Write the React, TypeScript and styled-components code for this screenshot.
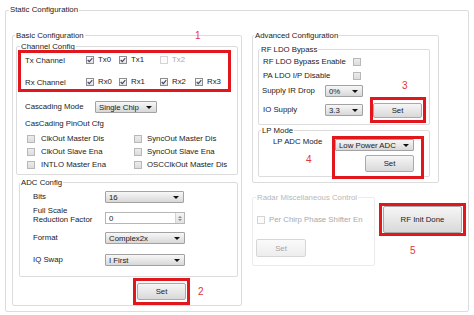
import React from "react";
import styled, { createGlobalStyle } from "styled-components";

const Global = createGlobalStyle`
  html, body { margin: 0; padding: 0; background: #fff; }
  body {
    font-family: "Liberation Sans", Arial, sans-serif;
    font-size: 7.8px;
    color: #222;
  }
`;

const RED = "#e2161d";

const Page = styled.div`
  width: 474px;
  height: 315px;
  box-sizing: border-box;
  padding: 4px 0 0 5px;
  background: #fff;
  overflow: hidden;
`;

const Group = styled.fieldset<{ $w: number; $h?: number; $dim?: boolean; $ml?: number; $mt?: number }>`
  margin: ${p => p.$mt ?? 0}px 0 0 ${p => p.$ml ?? 0}px;
  padding: 0;
  min-width: 0;
  box-sizing: border-box;
  width: ${p => p.$w}px;
  ${p => (p.$h ? `height: ${p.$h}px;` : "")}
  border: 1px solid ${p => (p.$dim ? "#ebebeb" : "#dcdcdc")};
  border-radius: 2px;
`;

const Title = styled.legend<{ $x: number; $dim?: boolean; $lh?: number }>`
  margin-left: ${p => p.$x}px;
  padding: 0 1px;
  line-height: ${p => p.$lh ?? 11}px;
  font-size: 7.8px;
  color: ${p => (p.$dim ? "#b8b8b8" : "#222")};
`;

const Columns = styled.div`
  display: flex;
  gap: 10px;
  padding: 14px 0 0 6px;
`;

const GroupBody = styled.div<{ $pad: string }>`
  padding: ${p => p.$pad};
`;

const RightCol = styled.div`
  display: flex;
  flex-direction: column;
`;

/* ---------- annotations ---------- */

const Mark = styled.div<{ $w: number; $h?: number; $pad?: string }>`
  position: relative;
  box-sizing: border-box;
  width: ${p => p.$w}px;
  ${p => (p.$h ? `height: ${p.$h}px;` : "")}
  border: 3px solid ${RED};
  padding: ${p => p.$pad ?? "0"};
`;

const Num = styled.span<{ $x?: number; $y?: number }>`
  position: ${p => (p.$x !== undefined ? "absolute" : "static")};
  left: ${p => p.$x ?? 0}px;
  top: ${p => p.$y ?? 0}px;
  font-family: "Liberation Sans", Arial, sans-serif;
  font-size: 10px;
  line-height: 12px;
  color: #e3343a;
`;

/* ---------- controls ---------- */

type BoxState = "on" | "off" | "disabled";

const Box = styled.span<{ $state: BoxState }>`
  flex: none;
  width: 8px;
  height: 8px;
  box-sizing: border-box;
  display: inline-flex;
  align-items: center;
  justify-content: center;
  border: 1px solid
    ${p => (p.$state === "on" ? "#8d8d8d" : p.$state === "off" ? "#b8b8b8" : "#d4d4d4")};
  background: ${p =>
    p.$state === "on"
      ? "linear-gradient(#fdfdfd, #e4e4e4)"
      : p.$state === "off"
      ? "linear-gradient(#ececec, #dcdcdc)"
      : "#fbfbfb"};
`;

function CheckBox({ state }: { state: BoxState }) {
  return (
    <Box $state={state}>
      {state === "on" && (
        <svg width="6" height="6" viewBox="0 0 6 6">
          <path d="M0.7 3 L2.3 4.7 L5.3 1.1" fill="none" stroke="#3a4868" strokeWidth="1.1" />
        </svg>
      )}
    </Box>
  );
}

const Option = styled.label<{ $gap?: number; $dim?: boolean }>`
  display: inline-flex;
  align-items: center;
  gap: ${p => p.$gap ?? 4}px;
  line-height: 12px;
  white-space: nowrap;
  color: ${p => (p.$dim ? "#a9a9a9" : "inherit")};
`;

const Combo = styled.div<{ $w: number }>`
  flex: none;
  box-sizing: border-box;
  width: ${p => p.$w}px;
  height: 12px;
  display: flex;
  align-items: center;
  justify-content: space-between;
  padding: 0 4px 0 3px;
  border: 1px solid #a2a2a2;
  border-radius: 1px;
  background: linear-gradient(#f7f7f7, #d8d8d8);
  color: #1a1a1a;
  white-space: nowrap;
`;

const Arrow = styled.span`
  width: 0;
  height: 0;
  border-left: 3px solid transparent;
  border-right: 3px solid transparent;
  border-top: 3px solid #111;
`;

function Select({ w, value }: { w: number; value: string }) {
  return (
    <Combo $w={w}>
      <span>{value}</span>
      <Arrow />
    </Combo>
  );
}

const Spin = styled.div<{ $w: number }>`
  flex: none;
  box-sizing: border-box;
  width: ${p => p.$w}px;
  height: 12px;
  display: flex;
  align-items: center;
  justify-content: space-between;
  padding-left: 3px;
  border: 1px solid #b6b6b6;
  background: #fff;
  color: #1a1a1a;
`;

const SpinKeys = styled.div`
  height: 100%;
  width: 8px;
  display: flex;
  flex-direction: column;
  align-items: center;
  justify-content: center;
  gap: 1px;
  background: linear-gradient(#f4f4f4, #e2e2e2);
  border-left: 1px solid #d3d3d3;
`;

const Tri = styled.span<{ $up?: boolean }>`
  width: 0;
  height: 0;
  border-left: 2px solid transparent;
  border-right: 2px solid transparent;
  ${p => (p.$up ? "border-bottom: 2px solid #8a8a8a;" : "border-top: 2px solid #8a8a8a;")}
`;

const Button = styled.div<{ $w: number; $h: number; $off?: boolean }>`
  box-sizing: border-box;
  width: ${p => p.$w}px;
  height: ${p => p.$h}px;
  display: flex;
  align-items: center;
  justify-content: center;
  border: 1px solid ${p => (p.$off ? "#d6d6d6" : "#a9a9a9")};
  border-radius: 2px;
  background: ${p => (p.$off ? "linear-gradient(#fafafa, #ededed)" : "linear-gradient(#f6f6f6, #d9d9d9)")};
  color: ${p => (p.$off ? "#a6a6a6" : "#1a1a1a")};
`;

/* ---------- rows ---------- */

const ChannelGrid = styled.div`
  display: grid;
  grid-template-columns: 61px 33px 41px 35px auto;
  grid-auto-rows: 12px;
  row-gap: 10px;
  align-items: center;
`;

const Field = styled.div<{ $top?: number; $left?: number; $end?: boolean }>`
  display: flex;
  align-items: ${p => (p.$end ? "flex-end" : "center")};
  margin-top: ${p => p.$top ?? 0}px;
  padding-left: ${p => p.$left ?? 0}px;
`;

const Label = styled.span<{ $w: number; $lh?: number; $indent?: number }>`
  flex: none;
  box-sizing: border-box;
  width: ${p => p.$w}px;
  padding-left: ${p => p.$indent ?? 0}px;
  line-height: ${p => p.$lh ?? 12}px;
  white-space: nowrap;
`;

const Caption = styled.div<{ $top: number; $left: number }>`
  margin-top: ${p => p.$top}px;
  padding-left: ${p => p.$left}px;
  line-height: 12px;
`;

const PinGrid = styled.div`
  display: grid;
  grid-template-columns: 107px auto;
  grid-auto-rows: 12px;
  row-gap: 1px;
  align-items: center;
  margin-top: 3px;
  padding: 0 0 3px 10px;
`;

const SetRow = styled.div`
  display: flex;
  align-items: center;
  gap: 8px;
  margin-top: 1px;
  padding-left: 117px;
`;

const LdoBody = styled.div`
  display: flex;
  align-items: flex-end;
  padding-left: 3px;
`;

const LdoRows = styled.div`
  margin-bottom: 8px;
`;

const LpBody = styled.div`
  display: flex;
  align-items: flex-start;
`;

const LpStack = styled.div`
  display: flex;
  flex-direction: column;
  align-items: flex-end;
  gap: 4px;
`;

const BottomRow = styled.div`
  display: flex;
  align-items: flex-start;
  margin-top: 9px;
`;

const Gap = styled.div<{ $top?: number; $left?: number; $bottom?: number }>`
  margin: ${p => p.$top ?? 0}px 0 ${p => p.$bottom ?? 0}px ${p => p.$left ?? 0}px;
`;

export default function App() {
  return (
    <>
      <Global />
      <Page>
        <Group $w={464} $h={308}>
          <Title $x={3} $lh={12}>Static Configuration</Title>
          <Columns>
            {/* ---------------- Basic ---------------- */}
            <Group $w={230} $h={276}>
              <Title $x={2}>Basic Configuration</Title>
              <GroupBody $pad="0 3px">
                <Group $w={222}>
                  <Title $x={3}>Channel Config</Title>
                  <Gap $top={-2} $left={1}>
                    <Mark $w={213} $pad="1px 0 1px 4px">
                      <Num $x={174} $y={-23}>1</Num>
                      <ChannelGrid>
                        <span>Tx Channel</span>
                        <Option><CheckBox state="on" />Tx0</Option>
                        <Option><CheckBox state="on" />Tx1</Option>
                        <Option $dim><CheckBox state="disabled" />Tx2</Option>
                        <span />
                        <span>Rx Channel</span>
                        <Option><CheckBox state="on" />Rx0</Option>
                        <Option><CheckBox state="on" />Rx1</Option>
                        <Option><CheckBox state="on" />Rx2</Option>
                        <Option><CheckBox state="on" />Rx3</Option>
                      </ChannelGrid>
                    </Mark>
                  </Gap>
                  <Field $top={9} $left={8}>
                    <Label $w={70}>Cascading Mode</Label>
                    <Select w={62} value="Single Chip" />
                  </Field>
                  <Caption $top={5} $left={8}>CasCading PinOut Cfg</Caption>
                  <PinGrid>
                    <Option $gap={6}><CheckBox state="off" />ClkOut Master Dis</Option>
                    <Option $gap={5}><CheckBox state="off" />SyncOut Master Dis</Option>
                    <Option $gap={6}><CheckBox state="off" />ClkOut Slave Ena</Option>
                    <Option $gap={5}><CheckBox state="off" />SyncOut Slave Ena</Option>
                    <Option $gap={6}><CheckBox state="off" />INTLO Master Ena</Option>
                    <Option $gap={5}><CheckBox state="off" />OSCClkOut Master Dis</Option>
                  </PinGrid>
                </Group>

                <Group $w={219} $ml={3} $mt={2}>
                  <Title $x={0}>ADC Config</Title>
                  <GroupBody $pad="0 0 10px 0">
                    <Field $top={3} $left={13}>
                      <Label $w={72}>Bits</Label>
                      <Select w={79} value="16" />
                    </Field>
                    <Field $top={4} $left={13} $end>
                      <Label $w={72} $lh={8.5}>
                        Full Scale
                        <br />
                        Reduction Factor
                      </Label>
                      <Spin $w={80}>
                        <span>0</span>
                        <SpinKeys>
                          <Tri $up />
                          <Tri />
                        </SpinKeys>
                      </Spin>
                    </Field>
                    <Field $top={8} $left={13}>
                      <Label $w={72}>Format</Label>
                      <Select w={80} value="Complex2x" />
                    </Field>
                    <Field $top={10} $left={13}>
                      <Label $w={72}>IQ Swap</Label>
                      <Select w={80} value="I First" />
                    </Field>
                  </GroupBody>
                </Group>

                <SetRow>
                  <Mark $w={57} $h={27} $pad="2px 1px">
                    <Button $w={49} $h={17}>Set</Button>
                  </Mark>
                  <Num>2</Num>
                </SetRow>
              </GroupBody>
            </Group>

            {/* ---------------- Right ---------------- */}
            <RightCol>
              <Group $w={187}>
                <Title $x={1}>Advanced Configuration</Title>
                <GroupBody $pad="3px 0 5px 5px">
                  <Group $w={172}>
                    <Title $x={1}>RF LDO Bypass</Title>
                    <LdoBody>
                      <LdoRows>
                        <Field $top={1}>
                          <Label $w={91} $indent={1}>RF LDO Bypass Enable</Label>
                          <CheckBox state="off" />
                        </Field>
                        <Field $top={2}>
                          <Label $w={91} $indent={1}>PA LDO I/P Disable</Label>
                          <CheckBox state="off" />
                        </Field>
                        <Field $top={3}>
                          <Label $w={63}>Supply IR Drop</Label>
                          <Select w={38} value="0%" />
                        </Field>
                        <Field $top={7}>
                          <Label $w={63} $indent={1}>IO Supply</Label>
                          <Select w={38} value="3.3" />
                        </Field>
                      </LdoRows>
                      <Gap $left={7} $bottom={1}>
                        <Mark $w={56} $h={26} $pad="3px 0 0 0">
                          <Num $x={29} $y={-20}>3</Num>
                          <Button $w={49} $h={15}>Set</Button>
                        </Mark>
                      </Gap>
                    </LdoBody>
                  </Group>

                  <Group $w={172}>
                    <Title $x={2}>LP Mode</Title>
                    <LpBody>
                      <Label $w={73} $indent={14}>LP ADC Mode</Label>
                      <Gap $bottom={-3}>
                        <Mark $w={92} $pad="0 7px 4px 0">
                          <Num $x={-29} $y={15}>4</Num>
                          <LpStack>
                            <Select w={79} value="Low Power ADC" />
                            <Button $w={49} $h={17}>Set</Button>
                          </LpStack>
                        </Mark>
                      </Gap>
                    </LpBody>
                  </Group>
                </GroupBody>
              </Group>

              <BottomRow>
                <Group $w={123} $dim>
                  <Title $x={3} $dim>Radar Miscellaneous Control</Title>
                  <GroupBody $pad="0 0 8px 4px">
                    <Field $top={11}>
                      <Option $gap={4} $dim>
                        <CheckBox state="disabled" />
                        Per Chirp Phase Shifter En
                      </Option>
                    </Field>
                    <Gap $top={13} $left={-1}>
                      <Button $w={50} $h={18} $off>Set</Button>
                    </Gap>
                  </GroupBody>
                </Group>
                <Gap $top={11} $left={4}>
                  <Mark $w={87} $h={33} $pad="0 1px">
                    <Button $w={79} $h={27}>RF Init Done</Button>
                    <Num $x={28} $y={39}>5</Num>
                  </Mark>
                </Gap>
              </BottomRow>
            </RightCol>
          </Columns>
        </Group>
      </Page>
    </>
  );
}
